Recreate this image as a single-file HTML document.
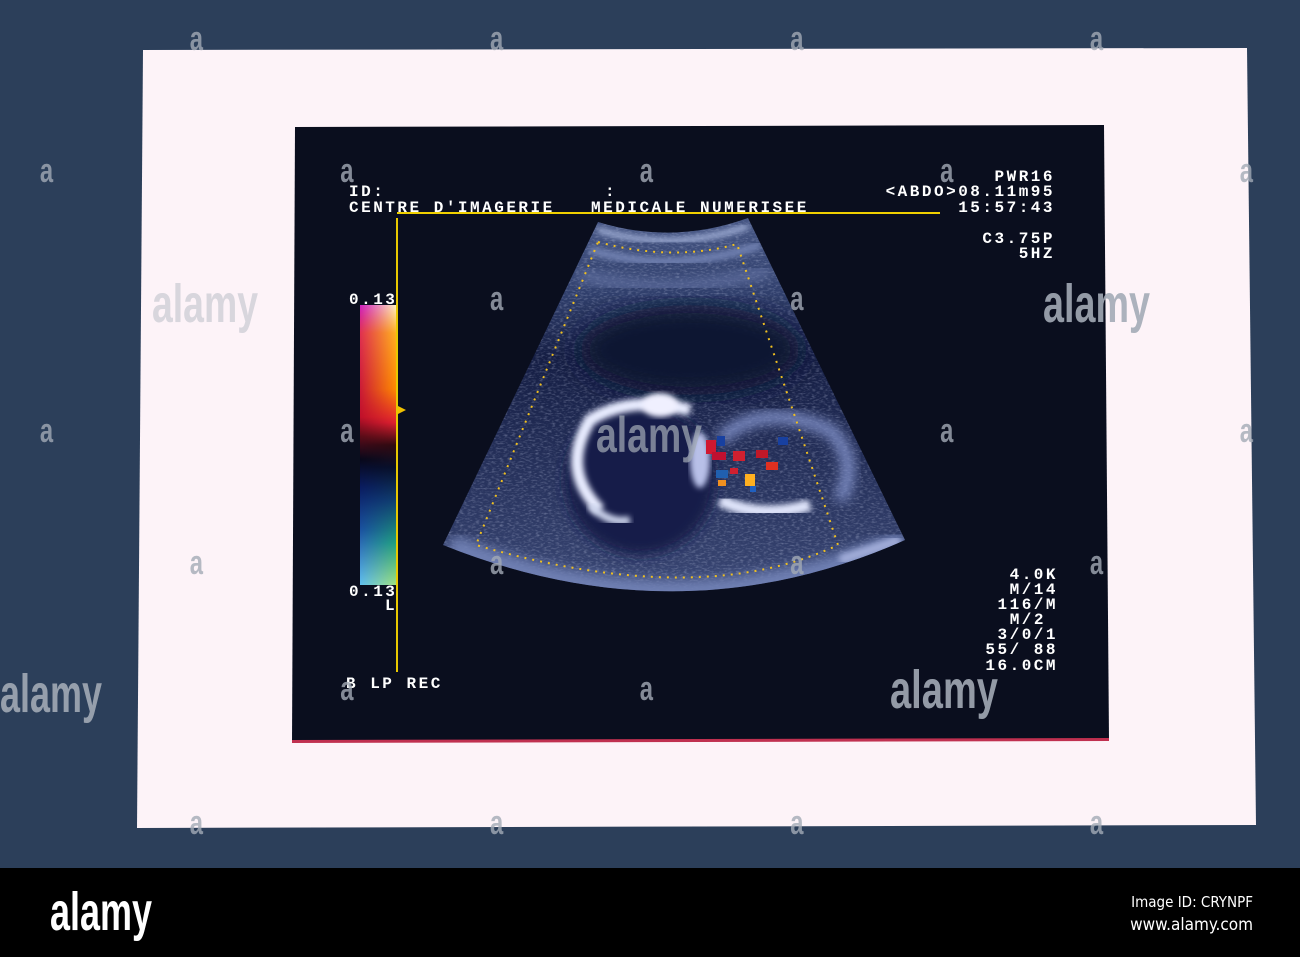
<!DOCTYPE html>
<html><head><meta charset="utf-8"><style>
html,body{margin:0;padding:0;width:1300px;height:957px;overflow:hidden;background:#2c3f5a}
svg{position:absolute;left:0;top:0}
.t{font-family:"Liberation Mono",monospace;font-weight:bold;font-size:16px;fill:#fff;letter-spacing:2.5px}
.wm{font-family:"Liberation Sans",sans-serif;font-weight:bold;fill:#a3abb6}
.wa{font-family:"Liberation Sans",sans-serif;font-weight:bold;fill:#a3abb6;font-size:34px}
</style></head><body>
<svg width="1300" height="957" viewBox="0 0 1300 957" xmlns="http://www.w3.org/2000/svg">
<defs>
<filter id="b6"><feGaussianBlur stdDeviation="6"/></filter>
<filter id="b3"><feGaussianBlur stdDeviation="3"/></filter>
<filter id="b12"><feGaussianBlur stdDeviation="12"/></filter>
<filter id="noise"><feTurbulence type="fractalNoise" baseFrequency="0.25 0.6" numOctaves="2" seed="3"/><feColorMatrix values="0 0 0 0 0.7  0 0 0 0 0.75  0 0 0 0 0.95  0 0 0 1.2 -0.55"/></filter>
<linearGradient id="fan" x1="0" y1="0" x2="0" y2="1">
<stop offset="0" stop-color="#4a5a88"/><stop offset="0.2" stop-color="#303f6c"/>
<stop offset="0.35" stop-color="#151e44"/><stop offset="0.6" stop-color="#25305a"/><stop offset="1" stop-color="#404e7c"/></linearGradient>
<linearGradient id="cbL" x1="0" y1="0" x2="0" y2="1">
<stop offset="0" stop-color="#d020c0"/><stop offset="0.1" stop-color="#e03050"/><stop offset="0.4" stop-color="#c0102a"/>
<stop offset="0.47" stop-color="#5a0c18"/><stop offset="0.55" stop-color="#08081a"/><stop offset="0.65" stop-color="#0a1c60"/>
<stop offset="0.8" stop-color="#1a50a0"/><stop offset="1" stop-color="#60c0f0"/></linearGradient>
<linearGradient id="cbR" x1="0" y1="0" x2="0" y2="1">
<stop offset="0" stop-color="#fff0c0"/><stop offset="0.1" stop-color="#ffb020"/><stop offset="0.3" stop-color="#ff8a00"/>
<stop offset="0.42" stop-color="#e02030"/><stop offset="0.5" stop-color="#300a10"/><stop offset="0.58" stop-color="#08102a"/>
<stop offset="0.7" stop-color="#104070"/><stop offset="0.85" stop-color="#20a080"/><stop offset="1" stop-color="#a0e080"/></linearGradient>
<linearGradient id="hz" x1="0" y1="0" x2="1" y2="0"><stop offset="0" stop-color="#fff" stop-opacity="0"/><stop offset="1" stop-color="#fff" stop-opacity="1"/></linearGradient>
<mask id="cbm"><rect x="360" y="305" width="36" height="280" fill="url(#hz)"/></mask>
<clipPath id="fc"><path d="M598 222 Q673 245 748 218 L905 540 Q680 640 443 545 Z"/></clipPath>
</defs>
<polygon points="143,50 1247,48 1256,825 137,828" fill="#fdf3f8"/>
<polygon points="295,127 1104,125 1109,740 292,742" fill="#0a0e1e"/>
<polygon points="292,740 1109,738 1109,741 292,743" fill="#c03050"/>
<g clip-path="url(#fc)">
<rect x="430" y="210" width="490" height="420" fill="url(#fan)"/>
<rect x="430" y="210" width="490" height="420" filter="url(#noise)" opacity="0.6"/>
<path d="M598 230 Q673 253 748 226" stroke="#9aa8d0" stroke-width="6" fill="none" filter="url(#b3)"/>
<path d="M590 250 Q673 275 760 245" stroke="#7080b0" stroke-width="8" fill="none" filter="url(#b3)"/>
<path d="M580 275 Q673 300 770 270" stroke="#6070a0" stroke-width="10" fill="none" filter="url(#b6)"/>
<ellipse cx="690" cy="350" rx="110" ry="45" fill="#0b1232" filter="url(#b12)"/>
<ellipse cx="640" cy="480" rx="75" ry="75" fill="#161f48" filter="url(#b6)"/>
<path d="M600 510 Q560 470 590 420 Q630 395 690 410" stroke="#e8ecff" stroke-width="12" fill="none" filter="url(#b3)"/>
<path d="M590 505 Q610 525 630 520" stroke="#d0d8f0" stroke-width="8" fill="none" filter="url(#b3)"/>
<path d="M720 500 Q760 520 810 505" stroke="#dfe4fa" stroke-width="12" fill="none" filter="url(#b3)"/>
<path d="M720 440 Q760 400 830 430 Q860 460 840 500" stroke="#8090c8" stroke-width="12" fill="none" filter="url(#b6)"/>
<ellipse cx="660" cy="405" rx="18" ry="12" fill="#f0f0ff" filter="url(#b3)"/>
<ellipse cx="700" cy="460" rx="10" ry="28" fill="#b8c0e8" filter="url(#b3)"/>
<path d="M450 545 Q680 640 905 540" stroke="#7080b4" stroke-width="22" fill="none" filter="url(#b6)"/>
<path d="M840 560 Q870 550 900 540" stroke="#a0acd8" stroke-width="10" fill="none" filter="url(#b3)"/>
</g>
<g>
<rect x="706" y="440" width="10" height="14" fill="#d01830"/><rect x="717" y="436" width="8" height="10" fill="#1840a0"/>
<rect x="712" y="452" width="14" height="8" fill="#c01030"/><rect x="733" y="451" width="12" height="10" fill="#d02030"/>
<rect x="756" y="450" width="12" height="8" fill="#c01828"/><rect x="766" y="462" width="12" height="8" fill="#e03020"/>
<rect x="716" y="470" width="12" height="8" fill="#2060b0"/><rect x="745" y="474" width="10" height="12" fill="#ffb020"/>
<rect x="730" y="468" width="8" height="6" fill="#d02030"/><rect x="718" y="480" width="8" height="6" fill="#f09020"/>
<rect x="778" y="437" width="10" height="8" fill="#1840a0"/><rect x="750" y="486" width="6" height="6" fill="#2060c0"/>
</g>
<g fill="none" stroke="#f0c020" stroke-width="2" stroke-dasharray="2 6">
<path d="M598 242 Q673 262 737 244 L838 545 Q700 610 476 545 Z"/>
</g>
<line x1="397" y1="213" x2="940" y2="213" stroke="#f0d000" stroke-width="2"/>
<line x1="397" y1="218" x2="397" y2="672" stroke="#e8c800" stroke-width="2"/>
<polygon points="398,406 406,410 398,414" fill="#f0c000"/>
<rect x="360" y="305" width="36" height="280" fill="url(#cbL)"/>
<rect x="360" y="305" width="36" height="280" fill="url(#cbR)" mask="url(#cbm)"/>
<text class="t" x="349" y="196">ID:</text>
<text class="t" x="605" y="196">:</text>
<text class="t" x="349" y="212" xml:space="preserve">CENTRE D'IMAGERIE   MEDICALE NUMERISEE</text>
<g text-anchor="end">
<text class="t" x="1055" y="181">PWR16</text>
<text class="t" x="1055" y="196">&lt;ABDO&gt;08.11m95</text>
<text class="t" x="1055" y="212">15:57:43</text>
<text class="t" x="1055" y="243">C3.75P</text>
<text class="t" x="1055" y="258">5HZ</text>
<text class="t" x="1058" y="579">4.0K</text>
<text class="t" x="1058" y="594">M/14</text>
<text class="t" x="1058" y="609">116/M</text>
<text class="t" x="1046" y="624">M/2</text>
<text class="t" x="1058" y="639">3/0/1</text>
<text class="t" x="1058" y="654" xml:space="preserve">55/ 88</text>
<text class="t" x="1058" y="670">16.0CM</text>
</g>
<text class="t" x="349" y="304">0.13</text>
<text class="t" x="349" y="596">0.13</text>
<text class="t" x="385" y="610">L</text>
<text class="t" x="346" y="688">B LP REC</text>
<g opacity="0.9">
<text class="wm" x="0" y="712" font-size="54" textLength="102" lengthAdjust="spacingAndGlyphs">alamy</text>
<text class="wm" x="152" y="322" font-size="54" textLength="106" lengthAdjust="spacingAndGlyphs" opacity="0.45">alamy</text>
<text class="wm" x="1043" y="322" font-size="54" textLength="107" lengthAdjust="spacingAndGlyphs">alamy</text>
<text class="wm" x="890" y="708" font-size="54" textLength="108" lengthAdjust="spacingAndGlyphs">alamy</text>
<text class="wm" x="596" y="452" font-size="50" textLength="106" lengthAdjust="spacingAndGlyphs" opacity="0.8">alamy</text>
</g>
<g opacity="0.8">
<g transform="scale(0.7,1)">
<text class="wa" x="271" y="50">a</text><text class="wa" x="700" y="50">a</text><text class="wa" x="1129" y="50">a</text><text class="wa" x="1557" y="50">a</text>
<text class="wa" x="486" y="182">a</text><text class="wa" x="914" y="182">a</text><text class="wa" x="1343" y="182">a</text>
<text class="wa" x="57" y="182">a</text><text class="wa" x="1771" y="182">a</text>
<text class="wa" x="700" y="310">a</text><text class="wa" x="1129" y="310">a</text>
<text class="wa" x="57" y="442">a</text><text class="wa" x="486" y="442">a</text><text class="wa" x="1343" y="442">a</text><text class="wa" x="1771" y="442">a</text>
<text class="wa" x="271" y="574">a</text><text class="wa" x="700" y="574">a</text><text class="wa" x="1129" y="574">a</text><text class="wa" x="1557" y="574">a</text>
<text class="wa" x="486" y="700">a</text><text class="wa" x="914" y="700">a</text>
<text class="wa" x="271" y="834">a</text><text class="wa" x="700" y="834">a</text><text class="wa" x="1129" y="834">a</text><text class="wa" x="1557" y="834">a</text>
</g></g>
<rect x="0" y="868" width="1300" height="89" fill="#000"/>
<text x="50" y="930" font-family="Liberation Sans,sans-serif" font-weight="bold" font-size="54" fill="#fff" textLength="102" lengthAdjust="spacingAndGlyphs">alamy</text>
<text x="1253" y="907" text-anchor="end" font-family="DejaVu Sans Condensed,Liberation Sans Narrow,sans-serif" font-size="15" fill="#fff">Image ID: CRYNPF</text>
<text x="1253" y="930" text-anchor="end" font-family="DejaVu Sans Condensed,Liberation Sans Narrow,sans-serif" font-size="17" fill="#fff">www.alamy.com</text>
</svg>
</body></html>
